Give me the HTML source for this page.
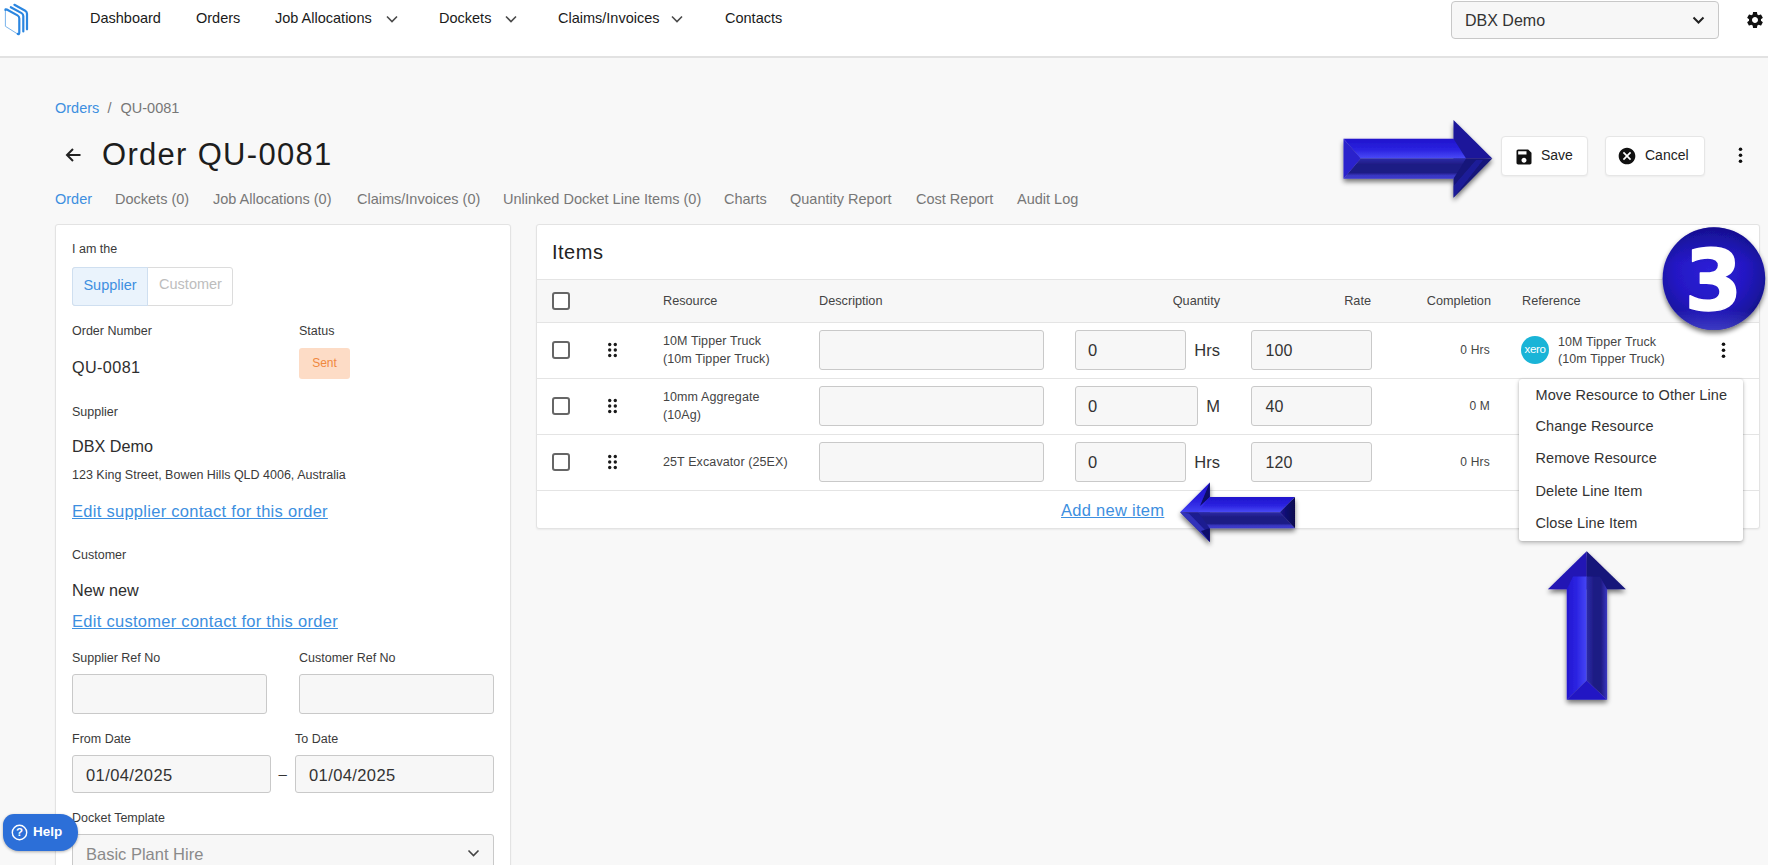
<!DOCTYPE html>
<html lang="en">
<head>
<meta charset="utf-8">
<title>Order QU-0081</title>
<style>
*{box-sizing:border-box;margin:0;padding:0}
html,body{width:1768px;height:865px;overflow:hidden}
body{background:#f8f8f8;font-family:"Liberation Sans",sans-serif;color:#222;position:relative}
.abs{position:absolute;white-space:nowrap}
/* nav */
#nav{position:absolute;left:0;top:0;width:1768px;height:58px;background:#fff;border-bottom:2px solid #e2e2e2}
.nv{position:absolute;top:10px;font-size:14.5px;color:#1a1a1a;line-height:17px;white-space:nowrap}
.chev{position:absolute;top:15px;width:12px;height:8px}
#org{position:absolute;left:1451px;top:1px;width:268px;height:38px;border:1px solid #c8c8c8;border-radius:4px;background:#f7f7f7;font-size:16px;color:#333;line-height:38px;padding-left:13px}
/* breadcrumb & title */
.blue{color:#3d8fe0}
.tab{position:absolute;top:191px;font-size:14.5px;line-height:17px;color:#777;white-space:nowrap}
.tab.blue{color:#3d8fe0}
.card{position:absolute;background:#fff;border:1px solid #e3e3e3;border-radius:3px;box-shadow:0 1px 2px rgba(0,0,0,.06)}
.lbl{position:absolute;font-size:12.5px;color:#3a3a3a;line-height:15px;white-space:nowrap}
.val{position:absolute;font-size:16.2px;color:#2e2e2e;line-height:20px;white-space:nowrap}
.lnk{position:absolute;font-size:16.5px;color:#3d8fe0;line-height:20px;text-decoration:underline;white-space:nowrap;letter-spacing:.28px}
.inp{position:absolute;background:#f7f7f7;border:1px solid #c9c9c9;border-radius:3px;font-size:16.5px;color:#333;white-space:nowrap}
.btn{position:absolute;background:#fff;border:1px solid #e6e6e6;border-radius:4px;height:40px;font-size:14px;color:#222;line-height:36px;box-shadow:0 1px 2px rgba(0,0,0,.05)}
.cb{position:absolute;width:18px;height:18px;border:2px solid #666;border-radius:3px;background:#fff}
.th{position:absolute;top:294px;font-size:12.7px;color:#444;line-height:14px;white-space:nowrap}
.rowline{position:absolute;left:536px;width:1223px;height:1px;background:#e4e4e4}
.res{position:absolute;font-size:12.5px;letter-spacing:.1px;color:#444;line-height:18px;white-space:nowrap;left:663px}
.unit{position:absolute;font-size:16.5px;color:#333;line-height:20px}
.cmp{position:absolute;font-size:12px;letter-spacing:.2px;color:#444;line-height:14px;text-align:right;width:80px;left:1410px}
.mi{position:absolute;left:1535.500px;letter-spacing:.08px;font-size:14.5px;color:#333;line-height:17px;white-space:nowrap}
</style>
</head>
<body>
<div id="nav">
  <svg class="abs" style="left:0;top:0" width="34" height="40" viewBox="0 0 34 40">
    <g fill="none" stroke="#2b86e0" stroke-linejoin="round" stroke-linecap="round">
      <path d="M14.400 4.800 L25.200 10.700 Q27 11.700 27 13.700 L27 29.300" stroke-width="2.200"/>
      <path d="M10.800 7.200 L21.600 13.100 Q23.300 14.100 23.300 16.100 L23.300 31.500" stroke-width="2.200"/>
      <path d="M5.400 10 L5.400 26.300 L17.300 33.800 Q19.300 34.900 19.300 32.500" stroke-width=".9" stroke="#6aaae8"/>
      <path d="M5.400 10 Q5.400 8.900 6.800 9.500 L17.500 15.400 Q19.300 16.400 19.300 18.400 L19.300 32.500 Q19.300 34.500 17.800 34" stroke-width="2.200"/>
    </g>
  </svg>
  <div class="nv" style="left:90px">Dashboard</div>
  <div class="nv" style="left:196px">Orders</div>
  <div class="nv" style="left:275px">Job Allocations</div>
  <svg class="chev" style="left:386px" viewBox="0 0 12 8"><path d="M1 1.500 L6 6.500 L11 1.500" fill="none" stroke="#4a4a4a" stroke-width="1.600"/></svg>
  <div class="nv" style="left:439px">Dockets</div>
  <svg class="chev" style="left:505px" viewBox="0 0 12 8"><path d="M1 1.500 L6 6.500 L11 1.500" fill="none" stroke="#4a4a4a" stroke-width="1.600"/></svg>
  <div class="nv" style="left:558px">Claims/Invoices</div>
  <svg class="chev" style="left:671px" viewBox="0 0 12 8"><path d="M1 1.500 L6 6.500 L11 1.500" fill="none" stroke="#4a4a4a" stroke-width="1.600"/></svg>
  <div class="nv" style="left:725px">Contacts</div>
  <div id="org">DBX Demo</div>
  <svg class="abs" style="left:1692px;top:16px" width="13" height="9" viewBox="0 0 13 9"><path d="M1.500 1.500 L6.500 6.500 L11.500 1.500" fill="none" stroke="#222" stroke-width="2"/></svg>
  <svg class="abs" style="left:1744.500px;top:10px" width="20" height="20" viewBox="0 0 24 24"><path fill="#111" d="M19.140 12.940c.040-.300.060-.610.060-.940 0-.320-.020-.640-.070-.940l2.030-1.580c.180-.140.230-.410.120-.610l-1.920-3.320c-.120-.220-.370-.290-.590-.220l-2.390.960c-.500-.380-1.030-.700-1.620-.940l-.360-2.540c-.040-.240-.240-.410-.480-.410h-3.840c-.240 0-.430.170-.470.410l-.360 2.540c-.590.240-1.130.570-1.620.940l-2.390-.960c-.220-.080-.470 0-.590.220L2.740 8.870c-.120.210-.080.470.120.610l2.030 1.580c-.050.300-.090.630-.090.940s.020.640.070.940l-2.030 1.580c-.180.140-.230.410-.120.610l1.920 3.320c.120.220.370.290.590.220l2.390-.960c.500.380 1.030.700 1.620.940l.360 2.540c.050.240.240.410.480.410h3.840c.240 0 .440-.170.470-.410l.360-2.540c.590-.240 1.130-.560 1.620-.940l2.390.960c.220.080.470 0 .590-.220l1.920-3.320c.120-.220.070-.470-.120-.610l-2.010-1.580zM12 15.600c-1.980 0-3.600-1.620-3.600-3.600s1.620-3.600 3.600-3.600 3.600 1.620 3.600 3.600-1.620 3.600-3.600 3.600z"/></svg>
</div>

<!-- breadcrumb -->
<div class="abs blue" style="left:55px;top:100px;font-size:14.5px;line-height:17px">Orders</div>
<div class="abs" style="left:107.500px;top:100px;font-size:14.5px;line-height:17px;color:#777">/</div>
<div class="abs" style="left:120.500px;top:100px;font-size:14.500px;line-height:17px;color:#777">QU-0081</div>

<!-- title -->
<svg class="abs" style="left:65px;top:147px" width="17" height="16" viewBox="0 0 17 16"><path d="M15.500 8 H2.500 M8 2 L2 8 L8 14" fill="none" stroke="#222" stroke-width="2"/></svg>
<div class="abs" id="title" style="left:102px;top:135px;font-size:31px;line-height:40px;color:#1d1d1d;letter-spacing:1.300px">Order QU-0081</div>

<!-- tabs -->
<div class="tab blue" style="left:55px">Order</div>
<div class="tab" style="left:115px">Dockets (0)</div>
<div class="tab" style="left:213px">Job Allocations (0)</div>
<div class="tab" style="left:357px">Claims/Invoices (0)</div>
<div class="tab" style="left:503px">Unlinked Docket Line Items (0)</div>
<div class="tab" style="left:724px">Charts</div>
<div class="tab" style="left:790px">Quantity Report</div>
<div class="tab" style="left:916px">Cost Report</div>
<div class="tab" style="left:1017px">Audit Log</div>

<!-- buttons -->
<div class="btn" style="left:1501px;top:136px;width:87px"><svg class="abs" style="left:11.500px;top:9.500px" width="20" height="20" viewBox="0 0 24 24"><path fill="#111" d="M17 3H5c-1.110 0-2 .9-2 2v14c0 1.100.890 2 2 2h14c1.100 0 2-.9 2-2V7l-4-4zm-5 16c-1.660 0-3-1.340-3-3s1.340-3 3-3 3 1.340 3 3-1.340 3-3 3zm3-10H5V5h10v4z"/></svg><span class="abs" style="left:39px;top:0">Save</span></div>
<div class="btn" style="left:1605px;top:136px;width:100px"><svg class="abs" style="left:11px;top:9px" width="20" height="20" viewBox="0 0 24 24"><path fill="#111" d="M12 2C6.470 2 2 6.470 2 12s4.470 10 10 10 10-4.470 10-10S17.530 2 12 2zm5 13.590L15.590 17 12 13.410 8.410 17 7 15.590 10.590 12 7 8.410 8.410 7 12 10.590 15.590 7 17 8.410 13.410 12 17 15.590z"/></svg><span class="abs" style="left:39px;top:0">Cancel</span></div>

<!-- left card -->
<div class="card" id="lcard" style="left:55px;top:224px;width:456px;height:660px"></div>
<!-- right card -->
<div class="card" id="rcard" style="left:536px;top:224px;width:1224px;height:305px"></div>

<!-- left card content -->
<div class="lbl" style="left:72px;top:242px">I am the</div>
<div class="abs" style="left:72px;top:266.500px;width:161px;height:39.500px;border:1px solid #dcdcdc;border-radius:3px;background:#fff"></div>
<div class="abs" style="left:72px;top:266.500px;width:76px;height:39.500px;border:1px solid #cfdff0;border-radius:3px 0 0 3px;background:#eaf3fc;color:#3d8fe0;font-size:14.5px;line-height:35px;text-align:center">Supplier</div>
<div class="abs" style="left:148px;top:267px;width:85px;height:39px;color:#bdbdbd;font-size:14.500px;line-height:35px;text-align:center">Customer</div>
<div class="lbl" style="left:72px;top:324px">Order Number</div>
<div class="lbl" style="left:299px;top:324px">Status</div>
<div class="val" style="left:72px;top:357px;letter-spacing:.4px">QU-0081</div>
<div class="abs" style="left:299px;top:348px;width:51px;height:31px;background:#fddcc6;border-radius:3px;color:#f0883e;font-size:12px;line-height:31px;text-align:center">Sent</div>
<div class="lbl" style="left:72px;top:405px">Supplier</div>
<div class="val" style="left:72px;top:436px">DBX Demo</div>
<div class="lbl" style="left:72px;top:468px">123 King Street, Bowen Hills QLD 4006, Australia</div>
<div class="lnk" style="left:72px;top:501px">Edit supplier contact for this order</div>
<div class="lbl" style="left:72px;top:548px">Customer</div>
<div class="val" style="left:72px;top:580px">New new</div>
<div class="lnk" style="left:72px;top:611px">Edit customer contact for this order</div>
<div class="lbl" style="left:72px;top:651px">Supplier Ref No</div>
<div class="lbl" style="left:299px;top:651px">Customer Ref No</div>
<div class="inp" style="left:72px;top:674px;width:195px;height:40px"></div>
<div class="inp" style="left:299px;top:674px;width:195px;height:40px"></div>
<div class="lbl" style="left:72px;top:732px">From Date</div>
<div class="lbl" style="left:295px;top:732px">To Date</div>
<div class="inp" style="left:72px;top:755px;width:199px;height:38px;line-height:38px;padding-left:13px;letter-spacing:.4px">01/04/2025</div>
<div class="abs" style="left:278.500px;top:765px;font-size:15px;line-height:18px;color:#333">&#8211;</div>
<div class="inp" style="left:295px;top:755px;width:199px;height:38px;line-height:38px;padding-left:13px;letter-spacing:.4px">01/04/2025</div>
<div class="lbl" style="left:72px;top:811px">Docket Template</div>
<div class="inp" style="left:72px;top:834px;width:422px;height:40px;line-height:38px;padding-left:13px;color:#8a8a8a">Basic Plant Hire</div>
<svg class="abs" style="left:467px;top:849px" width="13" height="9" viewBox="0 0 13 9"><path d="M1.500 1.500 L6.500 6.500 L11.500 1.500" fill="none" stroke="#444" stroke-width="1.600"/></svg>
<!-- help -->
<div class="abs" style="left:3px;top:814px;width:75px;height:37px;border-radius:11px 18px 18px 16px;background:#2c6fd8;box-shadow:0 1px 3px rgba(0,0,0,.3)"></div>
<svg class="abs" style="left:11px;top:824px" width="17" height="17" viewBox="0 0 17 17"><circle cx="8.500" cy="8.500" r="7.200" fill="none" stroke="#fff" stroke-width="1.400"/></svg>
<div class="abs" style="left:11px;top:824px;width:17px;height:17px;color:#fff;font-size:11.5px;line-height:17px;text-align:center;font-weight:bold">?</div>
<div class="abs" style="left:33px;top:823px;color:#fff;font-size:13.5px;line-height:18px;font-weight:bold">Help</div>

<!-- right card content -->
<div class="abs" style="left:552px;top:240px;font-size:20px;line-height:24px;color:#222;letter-spacing:.5px">Items</div>
<div class="abs" style="left:537px;top:280px;width:1222px;height:42px;background:#f7f7f7"></div>
<div class="rowline" style="top:279px"></div>
<div class="rowline" style="top:322px"></div>
<div class="rowline" style="top:378px"></div>
<div class="rowline" style="top:434px"></div>
<div class="rowline" style="top:490px"></div>
<div class="cb" style="left:552px;top:292px"></div>
<div class="th" style="left:663px">Resource</div>
<div class="th" style="left:819px">Description</div>
<div class="th" style="left:1120px;width:100px;text-align:right">Quantity</div>
<div class="th" style="left:1271px;width:100px;text-align:right">Rate</div>
<div class="th" style="left:1391px;width:100px;text-align:right">Completion</div>
<div class="th" style="left:1522px">Reference</div>
<div class="cb" style="left:552px;top:341px"></div>
<svg class="abs" style="left:607px;top:342px" width="11" height="16" viewBox="0 0 11 16"><g fill="#1a1a1a"><circle cx="2.7" cy="2.500" r="1.700"/><circle cx="8.300" cy="2.500" r="1.700"/><circle cx="2.700" cy="8" r="1.700"/><circle cx="8.300" cy="8" r="1.700"/><circle cx="2.700" cy="13.500" r="1.700"/><circle cx="8.300" cy="13.500" r="1.700"/></g></svg>
<div class="res" style="top:332px">10M Tipper Truck<br>(10m Tipper Truck)</div>
<div class="inp" style="left:819px;top:330px;width:225px;height:40px"></div>
<div class="inp" style="left:1075px;top:330px;width:111px;height:40px;line-height:38px;padding-left:12px">0</div>
<div class="unit" style="left:1120px;width:100px;text-align:right;top:340px">Hrs</div>
<div class="inp" style="left:1251px;top:330px;width:121px;height:40px;line-height:39.500px;padding-left:13.500px;font-size:16px;letter-spacing:.1px">100</div>
<div class="cmp" style="top:343px">0 Hrs</div>
<div class="cb" style="left:552px;top:397px"></div>
<svg class="abs" style="left:607px;top:398px" width="11" height="16" viewBox="0 0 11 16"><g fill="#1a1a1a"><circle cx="2.7" cy="2.500" r="1.700"/><circle cx="8.300" cy="2.500" r="1.700"/><circle cx="2.700" cy="8" r="1.700"/><circle cx="8.300" cy="8" r="1.700"/><circle cx="2.700" cy="13.500" r="1.700"/><circle cx="8.300" cy="13.500" r="1.700"/></g></svg>
<div class="res" style="top:388px">10mm Aggregate<br>(10Ag)</div>
<div class="inp" style="left:819px;top:386px;width:225px;height:40px"></div>
<div class="inp" style="left:1075px;top:386px;width:123px;height:40px;line-height:38px;padding-left:12px">0</div>
<div class="unit" style="left:1120px;width:100px;text-align:right;top:396px">M</div>
<div class="inp" style="left:1251px;top:386px;width:121px;height:40px;line-height:39.500px;padding-left:13.500px;font-size:16px;letter-spacing:.1px">40</div>
<div class="cmp" style="top:399px">0 M</div>
<div class="cb" style="left:552px;top:453px"></div>
<svg class="abs" style="left:607px;top:454px" width="11" height="16" viewBox="0 0 11 16"><g fill="#1a1a1a"><circle cx="2.7" cy="2.500" r="1.700"/><circle cx="8.300" cy="2.500" r="1.700"/><circle cx="2.700" cy="8" r="1.700"/><circle cx="8.300" cy="8" r="1.700"/><circle cx="2.700" cy="13.500" r="1.700"/><circle cx="8.300" cy="13.500" r="1.700"/></g></svg>
<div class="res" style="top:453px">25T Excavator (25EX)</div>
<div class="inp" style="left:819px;top:442px;width:225px;height:40px"></div>
<div class="inp" style="left:1075px;top:442px;width:111px;height:40px;line-height:38px;padding-left:12px">0</div>
<div class="unit" style="left:1120px;width:100px;text-align:right;top:452px">Hrs</div>
<div class="inp" style="left:1251px;top:442px;width:121px;height:40px;line-height:39.500px;padding-left:13.500px;font-size:16px;letter-spacing:.1px">120</div>
<div class="cmp" style="top:455px">0 Hrs</div>

<div class="abs" style="left:1521px;top:336px;width:28px;height:28px;border-radius:50%;background:#1ab4d7;color:#fff;font-size:11.5px;line-height:26px;text-align:center;letter-spacing:-.4px">xero</div>
<div class="res" style="left:1558px;top:333.500px;line-height:17px">10M Tipper Truck<br>(10m Tipper Truck)</div>
<svg class="abs" style="left:1721px;top:342px" width="5" height="17" viewBox="0 0 5 17"><g fill="#111"><circle cx="2.500" cy="2.200" r="1.800"/><circle cx="2.500" cy="8.200" r="1.800"/><circle cx="2.500" cy="14.200" r="1.800"/></g></svg>
<div class="lnk" style="left:1061px;top:500px">Add new item</div>
<!-- dropdown -->
<div class="abs" style="left:1519px;top:379px;width:224px;height:162px;background:#fff;border-radius:3px;box-shadow:0 2px 4px rgba(0,0,0,.25),0 0 2px rgba(0,0,0,.15)"></div>
<div class="mi" style="top:387px">Move Resource to Other Line</div>
<div class="mi" style="top:418px">Change Resource</div>
<div class="mi" style="top:450px">Remove Resource</div>
<div class="mi" style="top:483px">Delete Line Item</div>
<div class="mi" style="top:515px">Close Line Item</div>
<!-- kebab top -->
<svg class="abs" style="left:1738px;top:147px" width="5" height="17" viewBox="0 0 5 17"><g fill="#111"><circle cx="2.500" cy="2.200" r="1.800"/><circle cx="2.500" cy="8.200" r="1.800"/><circle cx="2.500" cy="14.200" r="1.800"/></g></svg>

<!-- annotations overlay -->
<svg class="abs" id="anno" style="left:0;top:0" width="1768" height="865" viewBox="0 0 1768 865">
<defs>
  <filter id="sh" x="-20%" y="-20%" width="140%" height="150%"><feGaussianBlur in="SourceAlpha" stdDeviation="2.600"/><feOffset dx="0" dy="3"/><feComponentTransfer><feFuncA type="linear" slope=".55"/></feComponentTransfer><feMerge><feMergeNode/><feMergeNode in="SourceGraphic"/></feMerge></filter>
  <linearGradient id="hTop" x1="0" y1="0" x2="0" y2="1"><stop offset="0" stop-color="#2014cc"/><stop offset=".55" stop-color="#2a22e0"/><stop offset="1" stop-color="#4a4af6"/></linearGradient>
  <linearGradient id="hBot" x1="0" y1="0" x2="0" y2="1"><stop offset="0" stop-color="#2c2aa8"/><stop offset=".3" stop-color="#1e1c84"/><stop offset=".7" stop-color="#1e1c84"/><stop offset=".85" stop-color="#3a38c4"/><stop offset="1" stop-color="#3c3acc"/></linearGradient>
  <linearGradient id="vL" x1="0" y1="0" x2="1" y2="0"><stop offset="0" stop-color="#2216d0"/><stop offset=".5" stop-color="#2c24e2"/><stop offset="1" stop-color="#4646f6"/></linearGradient>
  <linearGradient id="vR" x1="0" y1="0" x2="1" y2="0"><stop offset="0" stop-color="#2c2aa8"/><stop offset=".35" stop-color="#1e1c84"/><stop offset=".7" stop-color="#1e1c84"/><stop offset="1" stop-color="#3a36c0"/></linearGradient>
  <radialGradient id="ball" cx=".46" cy=".42" r=".62"><stop offset="0" stop-color="#2c20d6"/><stop offset=".55" stop-color="#2418c4"/><stop offset=".85" stop-color="#1a14a0"/><stop offset="1" stop-color="#100e78"/></radialGradient>
  <linearGradient id="ballrim" x1="0" y1="0" x2="0" y2="1"><stop offset="0" stop-color="#0c0a70" stop-opacity=".55"/><stop offset=".35" stop-color="#0c0a70" stop-opacity="0"/><stop offset=".8" stop-color="#4a48d8" stop-opacity="0"/><stop offset="1" stop-color="#4a48d8" stop-opacity=".75"/></linearGradient>
  <linearGradient id="hdL" gradientUnits="userSpaceOnUse" x1="0" y1="482" x2="0" y2="512.200"><stop offset="0" stop-color="#2014cc"/><stop offset=".6" stop-color="#2a20de"/><stop offset="1" stop-color="#4242f2"/></linearGradient>
  <linearGradient id="endR" x1="0" y1="0" x2="1" y2="0"><stop offset="0" stop-color="#16148a"/><stop offset="1" stop-color="#08064c"/></linearGradient>
</defs>

<!-- arrow right (to Save) -->
<g filter="url(#sh)">
  <polygon points="1453.500,120 1492.300,158.400 1453.500,158.400" fill="#1a189a"/>
  <polygon points="1453.500,158.400 1492.300,158.400 1453.500,197.800" fill="#16147a"/>
  <polygon points="1453.500,197.800 1453.500,186 1476,160 1483,160" fill="#2624b0" opacity=".55"/>
  <polygon points="1343.500,138.700 1453.500,138.700 1466,158.400 1360.700,158.400" fill="url(#hTop)"/>
  <polygon points="1360.700,158.400 1466,158.400 1453.500,178.700 1343.500,178.700" fill="url(#hBot)"/>
  <polygon points="1343.500,138.700 1360.700,158.400 1343.500,178.700" fill="#2a20cc"/>
</g>

<!-- arrow left (to Add new item) -->
<g filter="url(#sh)">
  <polygon points="1209.800,482.400 1180.100,512.200 1209.800,512.200" fill="url(#hdL)"/>
  <polygon points="1180.100,512.200 1209.800,512.200 1209.800,542" fill="#1c1a90"/>
  <polygon points="1209.800,482.400 1209.800,497 1200,506" fill="#0c0a66"/>
  <polygon points="1180.100,512.200 1209.800,542 1209.800,535 1189,513.500" fill="#3a38c8" opacity=".75"/>
  <polygon points="1209.800,528.200 1209.800,542 1201,531" fill="#0e0c6a"/>
  <polygon points="1209.800,497 1295,497 1280,512.200 1198,512.200" fill="url(#hTop)"/>
  <polygon points="1198,512.200 1280,512.200 1295,528.200 1209.800,528.200" fill="url(#hBot)"/>
  <polygon points="1295,497 1280,512.200 1295,528.200" fill="url(#endR)"/>
</g>

<!-- arrow up (to menu) -->
<g filter="url(#sh)">
  <polygon points="1586.700,551.200 1547.900,589.200 1586.700,589.200" fill="#2016b4"/>
  <polygon points="1586.700,551.200 1625.800,589.200 1586.700,589.200" fill="#14127a"/>
  <polygon points="1566.800,589.200 1566.800,699.700 1586.700,680.400 1586.700,576.600 1573,576.600" fill="url(#vL)"/>
  <polygon points="1586.700,576.600 1586.700,680.400 1607.100,699.700 1607.100,589.200 1600,576.600" fill="url(#vR)"/>
  <polygon points="1566.800,699.700 1586.700,680.400 1607.100,699.700" fill="#2418c4"/>
</g>

<!-- ball 3 -->
<g filter="url(#sh)">
  <circle cx="1713.900" cy="278.500" r="51.300" fill="url(#ball)"/>
  <circle cx="1713.900" cy="278.500" r="51.300" fill="url(#ballrim)"/>
</g>
<text x="1713.500" y="309.600" text-anchor="middle" font-family="'DejaVu Sans','Liberation Sans',sans-serif" font-weight="bold" font-size="83" fill="#fff" stroke="#fff" stroke-width="1.500" stroke-linejoin="round">3</text>
</svg>

</body>
</html>
